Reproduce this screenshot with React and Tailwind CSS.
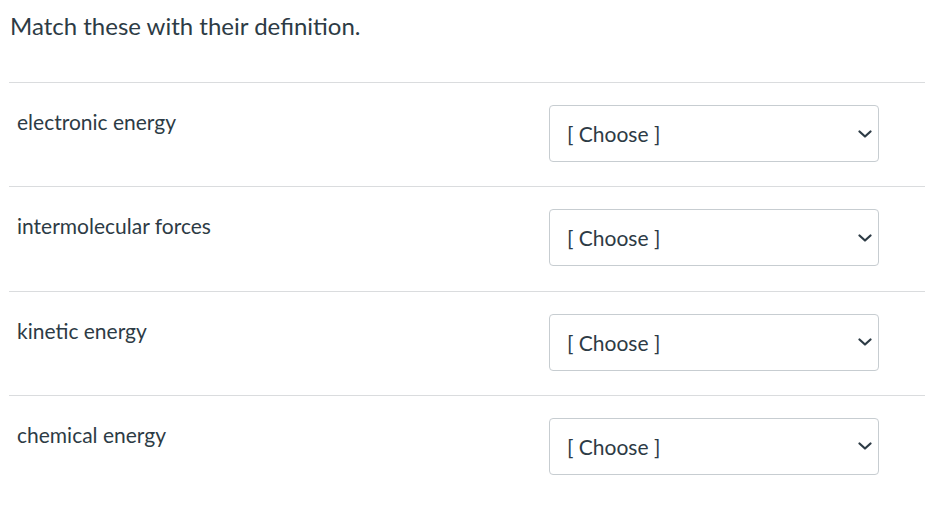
import React from "react";

const items = [
  "electronic energy",
  "intermolecular forces",
  "kinetic energy",
  "chemical energy",
];

function Chevron() {
  return (
    <svg width="14" height="8" viewBox="0 0 14 8" className="shrink-0">
      <path d="M1.5 1.5 L7 6.5 L12.5 1.5" fill="none" stroke="#2d3b45" strokeWidth="2.2" strokeLinecap="round" strokeLinejoin="round" />
    </svg>
  );
}

export default function App() {
  return (
    <div className="w-[925px] h-[505px] bg-white pl-[9px] text-[#2d3b45] overflow-hidden" style={{ fontFamily: "Lato, 'Open Sans', sans-serif" }}>
      <div className="h-[82px] pt-[12px] pl-[1px] text-[24px] leading-[1.2]">
        Match these with their definition.
      </div>
      {items.map((label) => (
        <div key={label} className="flex items-start border-t border-[#dadcde] h-[104.33px]">
          <div className="w-[540px] pl-[8px] pt-[26px] text-[21px] leading-[1.2]">{label}</div>
          <div className="mt-[22px] w-[330px] h-[57px] border border-[#c7cdd1] rounded-[4px] flex items-center justify-between pl-[17px] pr-[6px]">
            <span className="text-[21px] leading-[1.2]">[ Choose ]</span>
            <Chevron />
          </div>
        </div>
      ))}
    </div>
  );
}
